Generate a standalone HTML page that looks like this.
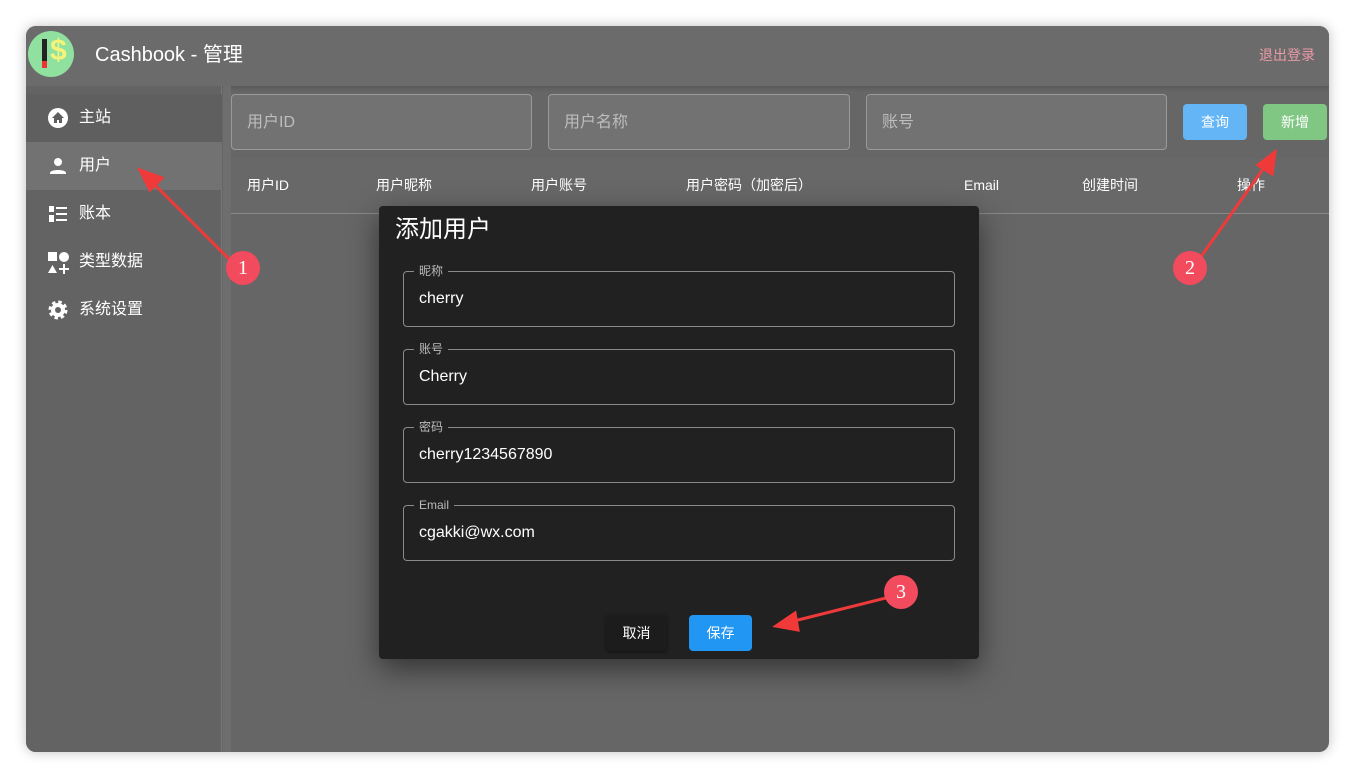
<!DOCTYPE html>
<html><head><meta charset="utf-8"><style>
*{box-sizing:border-box;margin:0;padding:0}
body{width:1355px;height:778px;background:#fff;font-family:"Liberation Sans","Noto Sans CJK SC",sans-serif;position:relative;overflow:hidden;color:#fff}
.win{position:absolute;left:26px;top:26px;width:1303px;height:726px;border-radius:10px;overflow:hidden;background:#666;box-shadow:0 0 12px rgba(0,0,0,.25)}
.hdr{position:absolute;left:0;top:0;width:100%;height:60px;background:#6b6b6b;box-shadow:0 2px 4px rgba(0,0,0,.15)}
.logo{position:absolute;left:2px;top:5px;width:46px;height:46px;border-radius:50%;background:#90e0a0}
.title{position:absolute;left:69px;top:17px;font-size:20px;line-height:24px}
.logout{position:absolute;right:14px;top:19px;font-size:14px;line-height:20px;color:#e89aa6}
.side{position:absolute;left:0;top:60px;width:196px;height:666px;background:#636363;border-right:1px solid #777}
.item{position:absolute;left:0;width:196px;height:48px;font-size:16px;line-height:48px;padding-left:53px}
.item svg{position:absolute;left:22px;top:14px}
.inp{position:absolute;top:68px;height:56px;border:1px solid #9a9a9a;border-radius:4px;background:#727272;color:#bdbdbd;font-size:16px;line-height:20px;padding:18px 15px}
.btn{position:absolute;top:78px;width:64px;height:36px;border-radius:4px;font-size:14px;text-align:center;line-height:36px}
.th{position:absolute;top:149px;font-size:14px;line-height:20px}
.dlg{position:absolute;left:379px;top:206px;width:600px;height:453px;background:#212121;border-radius:4px;box-shadow:0 10px 30px rgba(0,0,0,.5)}
.fld{position:absolute;left:24px;width:552px;height:56px;border:1px solid #8a8a8a;border-radius:4px;font-size:16px;line-height:20px;padding:17px 15px}
.fld span{position:absolute;top:-8px;left:10px;background:#212121;padding:0 5px;font-size:12px;color:#bbb;line-height:14px}
.circ{position:absolute;width:34px;height:34px;border-radius:50%;background:#f24b5e;font-family:"Liberation Serif",serif;font-size:20px;text-align:center;line-height:34px;color:#fff}
</style></head><body>
<div class="win">
 <div class="hdr">
  <div class="logo"><div style="position:absolute;left:14px;top:8px;width:5px;height:22px;background:#222"></div><div style="position:absolute;left:14px;top:30px;width:5px;height:7px;background:#e33"></div><div style="position:absolute;left:22px;top:3px;font-size:30px;font-weight:bold;color:#f4f47a">$</div></div>
  <div class="title">Cashbook - 管理</div>
  <div class="logout">退出登录</div>
 </div>
 <div class="side">
  <div class="item" style="top:8px;background:#5f5f5f"><svg width="20" height="20" viewBox="0 0 20 20"><circle cx="10" cy="10" r="10" fill="#fff"/><path d="M10 4L4 10h2v5h3v-3h2v3h3v-5h2z" fill="#5f5f5f"/></svg>主站</div>
  <div class="item" style="top:56px;background:#727272"><svg width="20" height="20" viewBox="0 0 20 20"><circle cx="10" cy="6" r="4" fill="#fff"/><path d="M2 17c0-4 16-4 16 0v1H2z" fill="#fff"/></svg>用户</div>
  <div class="item" style="top:104px"><svg width="20" height="20" viewBox="0 0 20 20" fill="#fff"><rect x="1" y="2" width="5" height="6"/><rect x="1" y="11" width="5" height="7"/><rect x="8" y="3" width="11" height="2"/><rect x="8" y="9" width="11" height="2"/><rect x="8" y="15" width="11" height="2"/></svg>账本</div>
  <div class="item" style="top:152px"><svg width="22" height="22" viewBox="0 0 22 22" fill="#fff"><rect x="0" y="0" width="9" height="9"/><circle cx="16" cy="5" r="5"/><path d="M0 21L4.5 13 9 21z"/><path d="M15 12h2v4h4v2h-4v4h-2v-4h-4v-2h4z"/></svg>类型数据</div>
  <div class="item" style="top:200px"><svg width="20" height="20" viewBox="0 0 20 20"><circle cx="10" cy="10" r="7" fill="#fff" stroke="#fff" stroke-width="5" stroke-dasharray="3 2.5"/><circle cx="10" cy="10" r="6.5" fill="#fff"/><circle cx="10" cy="10" r="3" fill="#636363"/></svg>系统设置</div>
 </div>
 <div style="position:absolute;left:197px;top:60px;width:8px;height:666px;background:#6e6e6e"></div>
 <div class="inp" style="left:205px;width:301px">用户ID</div>
 <div class="inp" style="left:522px;width:302px">用户名称</div>
 <div class="inp" style="left:840px;width:301px">账号</div>
 <div class="btn" style="left:1157px;background:#64b5f6">查询</div>
 <div class="btn" style="left:1237px;background:#81c784">新增</div>
 <div style="position:absolute;left:205px;top:132px;width:1098px;height:56px;background:#686868;border-bottom:1px solid #8a8a8a"></div>
 <div class="th" style="left:221px">用户ID</div>
 <div class="th" style="left:350px">用户昵称</div>
 <div class="th" style="left:505px">用户账号</div>
 <div class="th" style="left:660px">用户密码（加密后）</div>
 <div class="th" style="left:938px">Email</div>
 <div class="th" style="left:1056px">创建时间</div>
 <div class="th" style="left:1211px">操作</div>
</div>
<div class="dlg">
 <div style="position:absolute;left:16px;top:10px;font-size:24px;line-height:28px">添加用户</div>
 <div class="fld" style="top:65px"><span>昵称</span>cherry</div>
 <div class="fld" style="top:143px"><span>账号</span>Cherry</div>
 <div class="fld" style="top:221px"><span>密码</span>cherry1234567890</div>
 <div class="fld" style="top:299px"><span>Email</span>cgakki@wx.com</div>
 <div style="position:absolute;left:227px;top:409px;width:61px;height:36px;background:#1c1c1c;border-radius:4px;font-size:14px;text-align:center;line-height:36px;box-shadow:0 1px 3px rgba(0,0,0,.5)">取消</div>
 <div style="position:absolute;left:310px;top:409px;width:63px;height:36px;background:#2196f3;border-radius:4px;font-size:14px;text-align:center;line-height:36px">保存</div>
</div>
<svg style="position:absolute;left:0;top:0" width="1355" height="778">
 <g stroke="#f03a3a" stroke-width="3" fill="#f03a3a">
  <line x1="230" y1="260" x2="150" y2="180"/><path d="M140 170L162 178 150 190z"/>
  <line x1="1200" y1="258" x2="1268" y2="162"/><path d="M1275 152L1272 174 1258 165z"/>
  <line x1="890" y1="597" x2="790" y2="622"/><path d="M776 626L795 613 798 630z"/>
 </g>
</svg>
<div class="circ" style="left:226px;top:251px">1</div>
<div class="circ" style="left:1173px;top:251px">2</div>
<div class="circ" style="left:884px;top:575px">3</div>
</body></html>
